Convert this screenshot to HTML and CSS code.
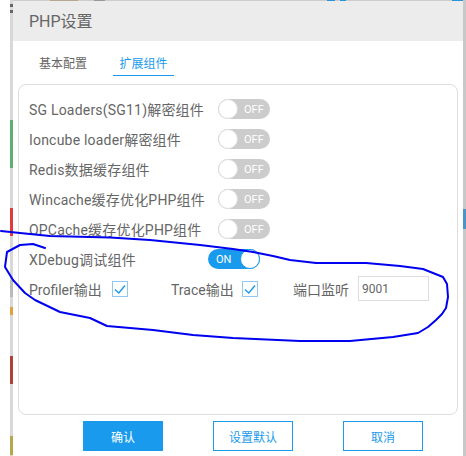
FILE: index.html
```html
<!DOCTYPE html>
<html>
<head>
  <meta charset="UTF-8">
  <title>PHP设置</title>
  <link rel="stylesheet" href="styles.css">
</head>
<body>
  <div class="strip strip-left"></div>
  <div class="dialog">
    <div class="dialog-title">PHP设置</div>
    <div class="tabs">
      <a class="tab">基本配置</a>
      <a class="tab active">扩展组件</a>
    </div>
    <div class="panel">
      <div class="row">
        <span class="row-label">SG Loaders(SG11)解密组件</span>
        <span class="switch"><i class="knob"></i><b>OFF</b></span>
      </div>
      <div class="row">
        <span class="row-label">Ioncube loader解密组件</span>
        <span class="switch"><i class="knob"></i><b>OFF</b></span>
      </div>
      <div class="row">
        <span class="row-label">Redis数据缓存组件</span>
        <span class="switch"><i class="knob"></i><b>OFF</b></span>
      </div>
      <div class="row">
        <span class="row-label">Wincache缓存优化PHP组件</span>
        <span class="switch"><i class="knob"></i><b>OFF</b></span>
      </div>
      <div class="row">
        <span class="row-label">OPCache缓存优化PHP组件</span>
        <span class="switch"><i class="knob"></i><b>OFF</b></span>
      </div>
      <div class="row">
        <span class="row-label xdebug-label">XDebug调试组件</span>
        <span class="switch on"><b>ON</b><i class="knob"></i></span>
      </div>
      <div class="row">
        <span class="option profiler">
          <span class="option-label">Profiler输出</span>
          <span class="check"><svg viewBox="0 0 16 16" width="16" height="16"><path d="M3 8.5 L6.8 12 L13 4.5" fill="none" stroke="#1a9aec" stroke-width="1.4"/></svg></span>
        </span>
        <span class="option trace">
          <span class="option-label">Trace输出</span>
          <span class="check"><svg viewBox="0 0 16 16" width="16" height="16"><path d="M3 8.5 L6.8 12 L13 4.5" fill="none" stroke="#1a9aec" stroke-width="1.4"/></svg></span>
        </span>
        <span class="option port">
          <span class="option-label">端口监听</span>
          <input class="port-input" type="text" value="9001">
        </span>
      </div>
    </div>
    <div class="actions">
      <button class="btn primary">确认</button>
      <button class="btn">设置默认</button>
      <button class="btn">取消</button>
    </div>
  </div>
  <div class="strip strip-right"></div>

  <!-- 手写标注 -->
  <svg class="ink" width="466" height="456" viewBox="0 0 466 456">
    <path d="M1 231 L20 233 L50 236 L110 237.5 L150 240 L200 245 L233 249 L253 252 L273 256 L290 260 L316 263 L366 263 L400 266 L423 269 L443 277 L447 284 L448 297 L446 308 L442 314 L436 320 L428 327 L418 333 L393 337 L350 341 L300 341 L233 338 L193 335 L153 330 L107 326 L90 318 L60 312 L35 300 L25 293 L13 280 L5 267 L7 252 L20 245 L33 244 L45 248" fill="none" stroke="#0000f0" stroke-width="2" stroke-linejoin="round" stroke-linecap="round"/>
  </svg>
</body>
</html>
```

FILE: styles.css
```css
html, body {
  margin: 0;
  height: 100%;
}
body {
  display: flex;
  width: 466px;
  height: 456px;
  padding: 0 0 0 10px;
  box-sizing: border-box;
  background: #fff linear-gradient(to right,
    #fff 0, #fff 10px, #ccc 10px, #ccc 50px, #b8a890 50px, #b8a890 78px, #ccc 78px, #ccc 94px,
    #999 94px, #999 105px, #ccc 105px, #ccc 327px, #2a94d8 327px, #2a94d8 335px, #ccc 335px,
    #ccc 340px, #2a94d8 340px, #2a94d8 346px, #ccc 346px, #ccc 452px, #2a94d8 452px) no-repeat 0 0 / 100% 1px;
  font-family: Roboto, "Noto Sans CJK SC", sans-serif;
  font-size: 14px;
  color: #666;
  overflow: hidden;
}
.strip {
  width: 3px;
  flex: none;
}
.strip-left {
  background: linear-gradient(to bottom,
    #d8d8d8 0, #d8d8d8 4px, #666 4px, #666 7px, #d8d8d8 7px, #d8d8d8 10px, #666 10px, #666 13px,
    #d8d8d8 13px, #d8d8d8 120px, #5fae73 120px, #5fae73 168px, #d8d8d8 168px, #d8d8d8 208px,
    #e03a3a 208px, #e03a3a 236px, #d8d8d8 236px, #d8d8d8 280px, #bbb 280px, #bbb 297px,
    #d8d8d8 297px, #d8d8d8 307px, #e0a040 307px, #e0a040 315px, #d8d8d8 315px, #d8d8d8 356px,
    #b04038 356px, #b04038 384px, #d8d8d8 384px, #d8d8d8 436px, #b5a84a 436px, #b5a84a 455px,
    #d8d8d8 455px);
}
.strip-right {
  background: linear-gradient(to bottom,
    #c8c8c8 0, #c8c8c8 209px, #4a94c8 209px, #4a94c8 229px, #c8c8c8 229px);
}
.dialog {
  width: 450px;
  flex: none;
  margin-top: 1px;
  display: flex;
  flex-direction: column;
  background: #fff;
}
.dialog-title {
  height: 40px;
  line-height: 42px;
  padding-left: 16px;
  background: #ececec;
  font-size: 16px;
  color: #666;
}
.tabs {
  display: flex;
  padding-left: 26px;
  gap: 26px;
}
.tab {
  height: 34px;
  line-height: 46px;
  font-size: 12px;
  text-align: center;
  color: #666;
  white-space: nowrap;
}
.tab.active {
  width: 61px;
  color: #1a9aec;
  border-bottom: 1px solid #1a9aec;
}
.panel {
  margin: 8px 5px 0 5px;
  height: 331px;
  box-sizing: border-box;
  padding: 9px 0 0 10px;
  border: 1px solid #ddd;
  border-radius: 8px;
}
.row {
  display: flex;
  align-items: center;
  height: 30px;
}
.row-label {
  width: 189px;
  flex: none;
  white-space: nowrap;
  letter-spacing: 0.2px;
}
.xdebug-label {
  width: 179px;
}
.switch {
  width: 52px;
  height: 20px;
  flex: none;
  display: flex;
  align-items: center;
  border-radius: 10px;
  background: #ccc;
  font-size: 11px;
  color: #fff;
}
.switch b {
  font-weight: 400;
  margin-left: 6px;
}
.knob {
  width: 18px;
  height: 18px;
  flex: none;
  border: 1px solid #ddd;
  border-radius: 50%;
  background: #fff;
}
.switch.on {
  background: #1a9aec;
}
.switch.on b {
  margin-left: 8px;
  margin-right: auto;
}
.switch.on .knob {
  border-color: #1a9aec;
}
.option {
  display: flex;
  align-items: center;
  white-space: nowrap;
}
.profiler {
  width: 142px;
}
.profiler .option-label {
  width: 83px;
}
.trace {
  width: 122px;
}
.trace .option-label {
  width: 71px;
}
.port .option-label {
  width: 65px;
}
.check {
  display: block;
  width: 16px;
  height: 16px;
  border: 1px solid #8fc8f0;
  box-sizing: border-box;
}
.check svg {
  display: block;
  margin: -1px;
}
.port-input {
  width: 71px;
  height: 25px;
  margin-bottom: 1px;
  box-sizing: border-box;
  padding: 0 3px;
  border: 1px solid #ddd;
  font-family: inherit;
  font-size: 12px;
  color: #666;
  outline: none;
}
.actions {
  display: flex;
  gap: 50px;
  padding: 6px 0 0 70px;
}
.btn {
  width: 80px;
  height: 30px;
  box-sizing: border-box;
  padding: 0;
  border: 1px solid #1a9aec;
  background: #fff;
  color: #1a9aec;
  font-family: inherit;
  font-size: 12px;
}
.btn.primary {
  background: #1a9aec;
  color: #fff;
}
.ink {
  position: absolute;
  left: 0;
  top: 0;
  pointer-events: none;
}
```
